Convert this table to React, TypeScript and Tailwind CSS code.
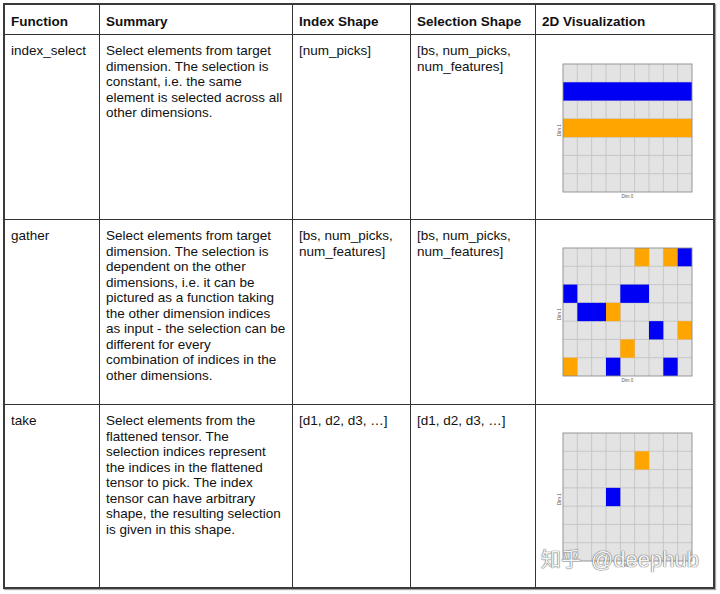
/** Tensor indexing ops comparison table — index_select / gather / take. */

const BLUE = '#0000f4';
const ORANGE = '#ffa500';

type Mark = [number, number, string, number?];

type Row = {
    fn: string;
    summary: string[];
    index: string[];
    selection: string[];
    marks: Mark[];
    pt: string;
    h: string;
};

const rows: Row[] = [
    {
        fn: 'index_select',
        summary: [
            'Select elements from target',
            'dimension. The selection is',
            'constant, i.e. the same',
            'element is selected across all',
            'other dimensions.',
        ],
        index: ['[num_picks]'],
        selection: ['[bs, num_picks,', 'num_features]'],
        marks: [
            [1, 0, BLUE, 9],
            [3, 0, ORANGE, 9],
        ],
        pt: 'pt-[24px]',
        h: 'h-[185px]',
    },
    {
        fn: 'gather',
        summary: [
            'Select elements from target',
            'dimension. The selection is',
            'dependent on the other',
            'dimensions, i.e. it can be',
            'pictured as a function taking',
            'the other dimension indices',
            'as input - the selection can be',
            'different for every',
            'combination of indices in the',
            'other dimensions.',
        ],
        index: ['[bs, num_picks,', 'num_features]'],
        selection: ['[bs, num_picks,', 'num_features]'],
        marks: [
            [0, 5, ORANGE],
            [0, 7, ORANGE],
            [0, 8, BLUE],
            [2, 0, BLUE],
            [2, 4, BLUE, 2],
            [3, 1, BLUE, 2],
            [3, 3, ORANGE],
            [4, 6, BLUE],
            [4, 8, ORANGE],
            [5, 4, ORANGE],
            [6, 0, ORANGE],
            [6, 3, BLUE],
            [6, 7, BLUE],
        ],
        pt: 'pt-[23px]',
        h: 'h-[185px]',
    },
    {
        fn: 'take',
        summary: [
            'Select elements from the',
            'flattened tensor. The',
            'selection indices represent',
            'the indices in the flattened',
            'tensor to pick. The index',
            'tensor can have arbitrary',
            'shape, the resulting selection',
            'is given in this shape.',
        ],
        index: ['[d1, d2, d3, …]'],
        selection: ['[d1, d2, d3, …]'],
        marks: [
            [1, 5, ORANGE],
            [3, 3, BLUE],
        ],
        pt: 'pt-[23px]',
        h: 'h-[183px]',
    },
];

function Viz({ marks }: { marks: Mark[] }) {
    const x0 = 7, y0 = 5, w = 129, h = 128, cols = 9, nrows = 7;
    const cw = w / cols, ch = h / nrows;
    return (
        <svg width="142" height="142" viewBox="0 0 142 142">
            <rect x={x0} y={y0} width={w} height={h} fill="#e3e3e3" />
            {Array.from({ length: cols - 1 }, (_, i) => (
                <line key={'v' + i} x1={x0 + cw * (i + 1)} x2={x0 + cw * (i + 1)} y1={y0} y2={y0 + h} stroke="#c4c4c4" strokeWidth="0.9" />
            ))}
            {Array.from({ length: nrows - 1 }, (_, i) => (
                <line key={'h' + i} x1={x0} x2={x0 + w} y1={y0 + ch * (i + 1)} y2={y0 + ch * (i + 1)} stroke="#c4c4c4" strokeWidth="0.9" />
            ))}
            {marks.map(([r, c, color, span = 1], i) => (
                <rect key={i} x={x0 + c * cw} y={y0 + r * ch} width={cw * span} height={ch} fill={color} />
            ))}
            <rect x={x0} y={y0} width={w} height={h} fill="none" stroke="#8c8c8c" strokeWidth="0.9" />
            <text x="5" y="71" fontSize="4.5" fill="#555" textAnchor="middle" transform="rotate(-90 5 71)" fontFamily="Liberation Sans, sans-serif">
                Dim 1
            </text>
            <text x={x0 + w / 2} y={y0 + h + 5.5} fontSize="4.5" fill="#555" textAnchor="middle" fontFamily="Liberation Sans, sans-serif">
                Dim 0
            </text>
        </svg>
    );
}

const cols = 'grid grid-cols-[94px_193px_118px_125px_178px]';
const cell = 'border-l border-[#333] pl-[6px]';

export default function App() {
    return (
        <div className="relative w-[720px] h-[594px] bg-white overflow-hidden pt-[3px] pl-[3px] font-['Liberation_Sans',Arial,sans-serif] text-[13.5px] leading-[15.5px] text-[#111]">
            <div className="w-[712px] h-[586px] border-2 border-[#3a3a3a] shadow-[1px_1px_1px_rgba(0,0,0,0.35)]">
                {/* Header */}
                <div className={`${cols} h-[29px] font-bold`}>
                    <div className="pl-[6px] pt-[9px]">Function</div>
                    <div className={`${cell} pt-[9px]`}>Summary</div>
                    <div className={`${cell} pl-[5px] pt-[9px]`}>Index Shape</div>
                    <div className={`${cell} pt-[9px]`}>Selection Shape</div>
                    <div className={`${cell} pt-[9px]`}>2D Visualization</div>
                </div>

                {rows.map(r => (
                    <div key={r.fn} className={`${cols} ${r.h} border-t border-[#333]`}>
                        <div className="pl-[6px] pt-[8px]">{r.fn}</div>
                        <div className={`${cell} pt-[8px] whitespace-nowrap`}>
                            {r.summary.map(l => (
                                <div key={l}>{l}</div>
                            ))}
                        </div>
                        <div className={`${cell} pl-[5px] pt-[8px] whitespace-nowrap`}>
                            {r.index.map(l => (
                                <div key={l}>{l}</div>
                            ))}
                        </div>
                        <div className={`${cell} pt-[8px] whitespace-nowrap`}>
                            {r.selection.map(l => (
                                <div key={l}>{l}</div>
                            ))}
                        </div>
                        <div className={`border-l border-[#333] pl-[20px] ${r.pt}`}>
                            <Viz marks={r.marks} />
                        </div>
                    </div>
                ))}
            </div>

            {/* Watermark */}
            <div className="absolute left-[541px] top-[549px] flex items-baseline gap-[10px] text-[22px] leading-none text-white/95 [text-shadow:0_0_1px_#555,0_0_1px_#555]">
                <span className="font-['Noto_Sans_CJK_SC',sans-serif] text-[20px]">知乎</span>
                <span className="font-['Liberation_Sans',Arial,sans-serif]">@deephub</span>
            </div>
        </div>
    );
}
